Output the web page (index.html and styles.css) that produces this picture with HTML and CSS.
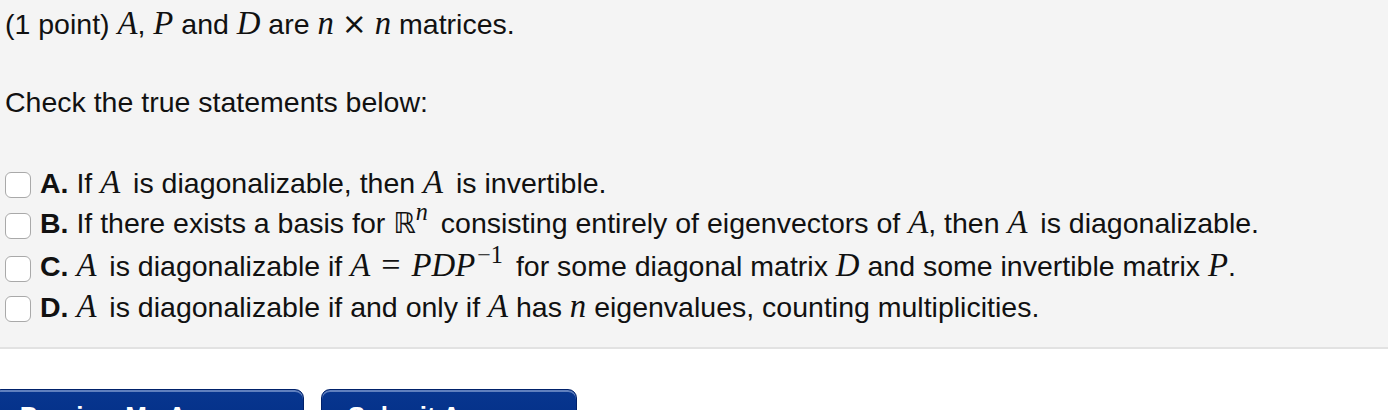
FILE: index.html
```html
<!DOCTYPE html>
<html>
<head>
<meta charset="utf-8">
<link rel="stylesheet" href="styles.css">
</head>
<body>
<div class="problem">
  <p class="intro">(1 point) <i class="m">A</i>, <i class="m">P</i> and <i class="m">D</i> are <i class="m">n</i> <span class="mo">×</span> <i class="m">n</i> matrices.</p>
  <p class="check">Check the true statements below:</p>
  <div class="options">
    <label class="opt opt-a"><span class="box"></span><span class="txt"><b>A.</b> If <i class="m gap">A</i> is diagonalizable, then <i class="m gap">A</i> is invertible.</span></label>
    <label class="opt opt-b"><span class="box"></span><span class="txt"><b>B.</b> If there exists a basis for <span class="bb">ℝ</span><sup class="m sup gap">n</sup> consisting entirely of eigenvectors of <i class="m">A</i>, then <i class="m gap">A</i> is diagonalizable.</span></label>
    <label class="opt opt-c"><span class="box"></span><span class="txt"><b>C.</b> <i class="m gap">A</i> is diagonalizable if <i class="m">A</i><span class="eq">=</span><i class="m">PDP</i><sup class="supn gap">−1</sup> for some diagonal matrix <i class="m">D</i> and some invertible matrix <i class="m">P</i>.</span></label>
    <label class="opt opt-d"><span class="box"></span><span class="txt"><b>D.</b> <i class="m gap">A</i> is diagonalizable if and only if <i class="m">A</i> has <i class="m">n</i> eigenvalues, counting multiplicities.</span></label>
  </div>
</div>
<div class="buttons">
  <button class="btn btn-preview">Preview My Answers</button>
  <button class="btn btn-submit">Submit Answers</button>
</div>
</body>
</html>
```
FILE: styles.css
```css
html, body {
  margin: 0;
  padding: 0;
  background: #ffffff;
}
body {
  font-family: "Liberation Sans", Arial, sans-serif;
  font-size: 28.5px;
  color: #111;
  overflow: hidden;
}
.problem {
  background: #f4f4f4;
  border-bottom: 2px solid #e2e2e2;
  padding: 3px 0 14px 5px;
  height: 330px;
  box-sizing: content-box;
}
p {
  margin: 0;
  line-height: 40px;
}
.check {
  margin-top: 38px;
}
.options {
  margin-top: 40px;
  display: flex;
  flex-direction: column;
}
.opt {
  display: flex;
  align-items: center;
  height: 40px;
  line-height: 40px;
}
.opt-b { height: 41px; }
.opt-c { height: 43px; margin-top: 1px; }
.opt-d { height: 40px; margin-top: -1px; }
.box {
  display: inline-block;
  width: 24px;
  height: 24px;
  background: #fff;
  border: 1px solid #a9a9a9;
  border-radius: 6px;
  margin-right: 9px;
  margin-top: 6px;
  flex: none;
}
.txt {
  white-space: nowrap;
}
.m {
  font-family: "Liberation Serif", "Times New Roman", serif;
  font-style: italic;
  font-size: 1.15em;
}
.gap {
  margin-right: 5px;
}
.mo {
  font-family: "DejaVu Sans", sans-serif;
  font-size: 1.05em;
}
.eq {
  font-family: "Liberation Serif", serif;
  font-size: 1.2em;
  margin: 0 11px;
}
.bb {
  font-family: "DejaVu Sans", sans-serif;
  font-size: 1em;
}
sup {
  line-height: 0;
}
.sup {
  font-size: 0.85em;
  vertical-align: 0.5em;
}
.supn {
  font-family: "Liberation Serif", serif;
  font-size: 0.85em;
  vertical-align: 0.55em;
  margin-left: 2px;
}
.buttons {
  display: flex;
  align-items: flex-start;
  gap: 17px;
  margin-top: 40px;
  margin-left: -8px;
}
.btn {
  font-family: "Liberation Sans", Arial, sans-serif;
  font-weight: bold;
  font-size: 26px;
  color: #fff;
  background: linear-gradient(#08368f, #002c84);
  border: 1px solid #00216a;
  border-radius: 9px;
  box-shadow: inset 0 2px 0 rgba(170, 190, 230, 0.55);
  padding: 11px 0 20px 0;
  text-align: center;
  line-height: 30px;
}
.btn-preview { width: 312px; }
.btn-submit { width: 256px; }
```
